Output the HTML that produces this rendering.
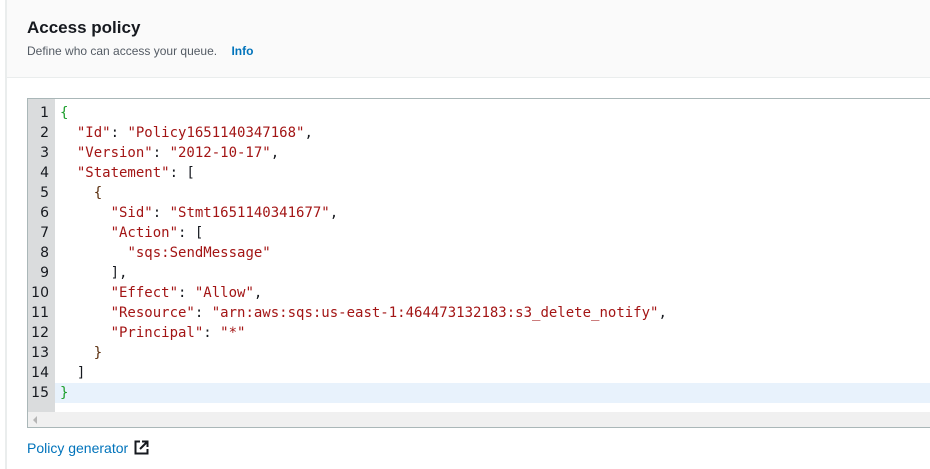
<!DOCTYPE html>
<html><head><style>
*{margin:0;padding:0;box-sizing:border-box}
body{width:930px;height:469px;background:#fff;position:relative;overflow:hidden;font-family:"Liberation Sans",sans-serif}
.lb{position:absolute;left:5px;top:0;width:2px;height:469px;background:#eaeded}
.hdr{position:absolute;left:7px;top:0;width:923px;height:78px;background:#fafafa;border-bottom:1px solid #eaeded}
h1{position:absolute;left:27px;top:18px;font-size:17px;font-weight:bold;color:#16191f}
.sub{position:absolute;left:27px;top:44px;font-size:12px;color:#545b64}
.sub b{color:#0073bb;margin-left:11px}
.ed{position:absolute;left:27px;top:98px;width:903px;height:330px;border-top:1px solid #aab7b8;border-left:1px solid #aab7b8;border-bottom:1px solid #aab7b8}
.gut{position:absolute;left:0;top:0;width:27px;height:313px;background:#dadcdd}
.code{position:absolute;left:0;top:4px;width:902px;font-family:"DejaVu Sans Mono","Liberation Mono",monospace;font-size:14px}
.ln{height:20px;line-height:20px;white-space:pre;position:relative}
.ln.hl{background:#e8f2fc}
.n{display:inline-block;width:27px;text-align:right;padding-right:6px;color:#16191f;background:#dadcdd;font-family:"DejaVu Sans",sans-serif}
.t{padding-left:5px;color:#16191f}
.s{color:#a31515}
.g{color:#1a9e2a}
.sb{position:absolute;left:0;bottom:0;width:902px;height:15px;background:#f0f0f0}
.sb:before{content:"";position:absolute;left:5px;top:4px;border-right:4px solid #b6b6b6;border-top:4px solid transparent;border-bottom:4px solid transparent}
.pg{position:absolute;left:27px;top:440px;font-size:14px;color:#0073bb}
</style></head><body>
<div class="lb"></div>
<div class="hdr"></div>
<h1>Access policy</h1>
<div class="sub">Define who can access your queue. <b>Info</b></div>
<div class="ed">
<div class="gut"></div>
<div class="code">
<div class="ln"><span class="n">1</span><span class="t"><span class="g">{</span></span></div>
<div class="ln"><span class="n">2</span><span class="t">  <span class="s">"Id"</span>: <span class="s">"Policy1651140347168"</span>,</span></div>
<div class="ln"><span class="n">3</span><span class="t">  <span class="s">"Version"</span>: <span class="s">"2012-10-17"</span>,</span></div>
<div class="ln"><span class="n">4</span><span class="t">  <span class="s">"Statement"</span>: [</span></div>
<div class="ln"><span class="n">5</span><span class="t">    <span style="color:#5a2d0c">{</span></span></div>
<div class="ln"><span class="n">6</span><span class="t">      <span class="s">"Sid"</span>: <span class="s">"Stmt1651140341677"</span>,</span></div>
<div class="ln"><span class="n">7</span><span class="t">      <span class="s">"Action"</span>: [</span></div>
<div class="ln"><span class="n">8</span><span class="t">        <span class="s">"sqs:SendMessage"</span></span></div>
<div class="ln"><span class="n">9</span><span class="t">      ],</span></div>
<div class="ln"><span class="n">10</span><span class="t">      <span class="s">"Effect"</span>: <span class="s">"Allow"</span>,</span></div>
<div class="ln"><span class="n">11</span><span class="t">      <span class="s">"Resource"</span>: <span class="s">"arn:aws:sqs:us-east-1:464473132183:s3_delete_notify"</span>,</span></div>
<div class="ln"><span class="n">12</span><span class="t">      <span class="s">"Principal"</span>: <span class="s">"*"</span></span></div>
<div class="ln"><span class="n">13</span><span class="t">    <span style="color:#5a2d0c">}</span></span></div>
<div class="ln"><span class="n">14</span><span class="t">  ]</span></div>
<div class="ln hl"><span class="n">15</span><span class="t"><span class="g">}</span></span></div>
</div>
<div class="sb"></div>
</div>
<div class="pg">Policy generator <svg width="15" height="15" viewBox="0 0 15 15" style="vertical-align:-2px;margin-left:2px"><path d="M6 1.5H1.5v12h12V9" fill="none" stroke="#16191f" stroke-width="2"/><path d="M8 1.5h5.5V7M13.5 1.5L6 9" fill="none" stroke="#16191f" stroke-width="2"/></svg></div>
</body></html>
